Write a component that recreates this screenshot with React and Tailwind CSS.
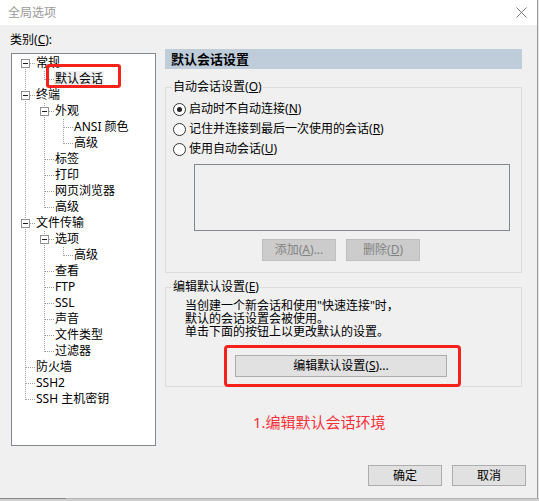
import React from "react";

// tree data for the category list
const tree = [
  { label: "常规", children: [{ label: "默认会话", sel: true }] },
  {
    label: "终端",
    children: [
      { label: "外观", children: [{ label: "ANSI 颜色" }, { label: "高级" }] },
      { label: "标签" },
      { label: "打印" },
      { label: "网页浏览器" },
      { label: "高级" },
    ],
  },
  {
    label: "文件传输",
    children: [
      { label: "选项", children: [{ label: "高级" }] },
      { label: "查看" },
      { label: "FTP" },
      { label: "SSL" },
      { label: "声音" },
      { label: "文件类型" },
      { label: "过滤器" },
    ],
  },
  { label: "防火墙" },
  { label: "SSH2" },
  { label: "SSH 主机密钥" },
];

const flatten = (nodes, trail = [], out = []) => {
  nodes.forEach((n, i) => {
    const last = i === nodes.length - 1;
    out.push({ ...n, trail, last, box: !!n.children, first: out.length === 0 });
    if (n.children) flatten(n.children, [...trail, !last], out);
  });
  return out;
};

const rows = flatten(tree);

const dot = { stroke: "#a0a0a0", strokeDasharray: "1 1", shapeRendering: "crispEdges" };

const Pipe = ({ on }) => (
  <svg width="19" height="16" className="shrink-0">
    {on && <line x1="9.5" y1="0" x2="9.5" y2="16" {...dot} />}
  </svg>
);

const Joint = ({ last, box, first }) => (
  <svg width="19" height="16" className="shrink-0">
    {!first && <line x1="9.5" y1="0" x2="9.5" y2="9" {...dot} />}
    {!last && <line x1="9.5" y1="8" x2="9.5" y2="16" {...dot} />}
    <line x1="10" y1="8.5" x2="19" y2="8.5" {...dot} />
    {box && (
      <g shapeRendering="crispEdges">
        <rect x="5.5" y="4.5" width="8" height="8" fill="#fff" stroke="#919191" />
        <line x1="7" y1="8.5" x2="12" y2="8.5" stroke="#1c1c1c" />
      </g>
    )}
  </svg>
);

const Key = ({ k }) => (
  <>
    (<span className="underline underline-offset-[1px]">{k}</span>)
  </>
);

const Radio = ({ on, children }) => (
  <div className="flex items-center h-[20px] pl-[7px]">
    <div className="w-[13px] h-[13px] rounded-full border border-[#333] bg-white flex items-center justify-center">
      {on && <div className="w-[5px] h-[5px] rounded-full bg-[#222]" />}
    </div>
    <span className="ml-[3px] leading-[16px]">{children}</span>
  </div>
);

export default function App() {
  return (
    <div className="w-[539px] h-[501px] bg-[#cfcfcf] overflow-hidden text-[12px] text-black font-['Noto_Sans','Noto_Sans_CJK_SC',sans-serif]">
      <div className="flex">
        <div className="w-[538px] h-[498px] border-r border-[#9a9a9a] flex flex-col">
          {/* title bar */}
          <div className="h-[25px] bg-white flex items-center justify-between pl-[8px] pr-[10px]">
            <span className="text-[#999] leading-[14px]">全局选项</span>
            <svg width="11" height="11" viewBox="0 0 11 11">
              <path d="M0.5 0.5 L10.5 10.5 M10.5 0.5 L0.5 10.5" stroke="#7a7a7a" strokeWidth="1" />
            </svg>
          </div>

          <div className="flex-1 bg-[#f0f0f0] flex flex-col">
            <div className="flex pl-[11px]">
              {/* left: category tree */}
              <div className="w-[145px] pt-[8px]">
                <div className="leading-[14px] -ml-[1px]">
                  类别<Key k="C" />:
                </div>
                <div className="mt-[6px] h-[393px] border border-[#828790] bg-white pt-[1px] pl-[4px]">
                  {rows.map((r, i) => (
                    <div key={i} className="relative flex h-[16px]">
                      {r.trail.map((on, j) => (
                        <Pipe key={j} on={on} />
                      ))}
                      <Joint last={r.last} box={r.box} first={r.first} />
                      <span
                        className={`px-[1px] leading-[16px] whitespace-nowrap ${r.sel ? "bg-[#f0f0f0]" : ""}`}
                      >
                        {r.label}
                      </span>
                      {r.sel && (
                        <div className="absolute left-[30px] -top-[7px] w-[75px] h-[24px] border-[3px] border-[#f5221b] rounded-[3px]" />
                      )}
                    </div>
                  ))}
                </div>
              </div>

              {/* right: settings panel */}
              <div className="ml-[9px] w-[357px]">
                <div className="mt-[24px] h-[20px] bg-[#bfcddb] pl-[6px] font-bold text-[13px] leading-[20px]">
                  默认会话设置
                </div>

                <fieldset className="mt-[11px] border border-[#dcdcdc] pt-[5px] pb-[11px]">
                  <legend className="ml-[6px] px-[1px] leading-[14px]">
                    自动会话设置<Key k="O" />
                  </legend>
                  <Radio on>
                    启动时不自动连接<Key k="N" />
                  </Radio>
                  <Radio>
                    记住并连接到最后一次使用的会话<Key k="R" />
                  </Radio>
                  <Radio>
                    使用自动会话<Key k="U" />
                  </Radio>
                  <div className="ml-[28px] mt-[5px] w-[316px] h-[67px] border border-[#828790] bg-[#f0f0f0]" />
                  <div className="flex gap-[10px] ml-[96px] mt-[8px]">
                    <div className="w-[74px] h-[22px] bg-[#cccccc] border border-[#bfbfbf] text-[#838383] flex items-center justify-center">
                      添加<Key k="A" />...
                    </div>
                    <div className="w-[74px] h-[22px] bg-[#cccccc] border border-[#bfbfbf] text-[#838383] flex items-center justify-center">
                      删除<Key k="D" />
                    </div>
                  </div>
                </fieldset>

                <fieldset className="mt-[7px] border border-[#dcdcdc] pt-[5px] pb-[9px]">
                  <legend className="ml-[6px] px-[1px] leading-[14px]">
                    编辑默认设置<Key k="E" />
                  </legend>
                  <div className="ml-[19px] leading-[13px]">
                    <div>当创建一个新会话和使用"快速连接"时，</div>
                    <div>默认的会话设置会被使用。</div>
                    <div>单击下面的按钮上以更改默认的设置。</div>
                  </div>
                  <div className="relative ml-[69px] mt-[17px] w-[212px] h-[22px] bg-[#e1e1e1] border border-[#adadad] flex items-center justify-center">
                    编辑默认设置<Key k="S" />...
                    <div className="absolute -left-[12px] -right-[15px] -top-[11px] -bottom-[11px] border-[3px] border-[#f5221b] rounded-[4px]" />
                  </div>
                </fieldset>

                <div className="mt-[25px] ml-[88px] text-[15px] leading-[20px] text-[#f5303a]">
                  1.编辑默认会话环境
                </div>
              </div>
            </div>

            {/* dialog buttons */}
            <div className="mt-auto flex justify-end gap-[10px] pr-[11px] pb-[12px]">
              <div className="w-[74px] h-[21px] bg-[#e1e1e1] border border-[#adadad] flex items-center justify-center">
                确定
              </div>
              <div className="w-[74px] h-[21px] bg-[#e1e1e1] border border-[#adadad] flex items-center justify-center">
                取消
              </div>
            </div>
          </div>
        </div>
        <div className="w-[1px] h-[498px] bg-[#e6e6e6]" />
      </div>
      <div className="flex h-[1px]">
        <div className="w-[66px] bg-[#8a8a8a]" />
        <div className="flex-1 bg-[#b5b5b5]" />
      </div>
    </div>
  );
}
